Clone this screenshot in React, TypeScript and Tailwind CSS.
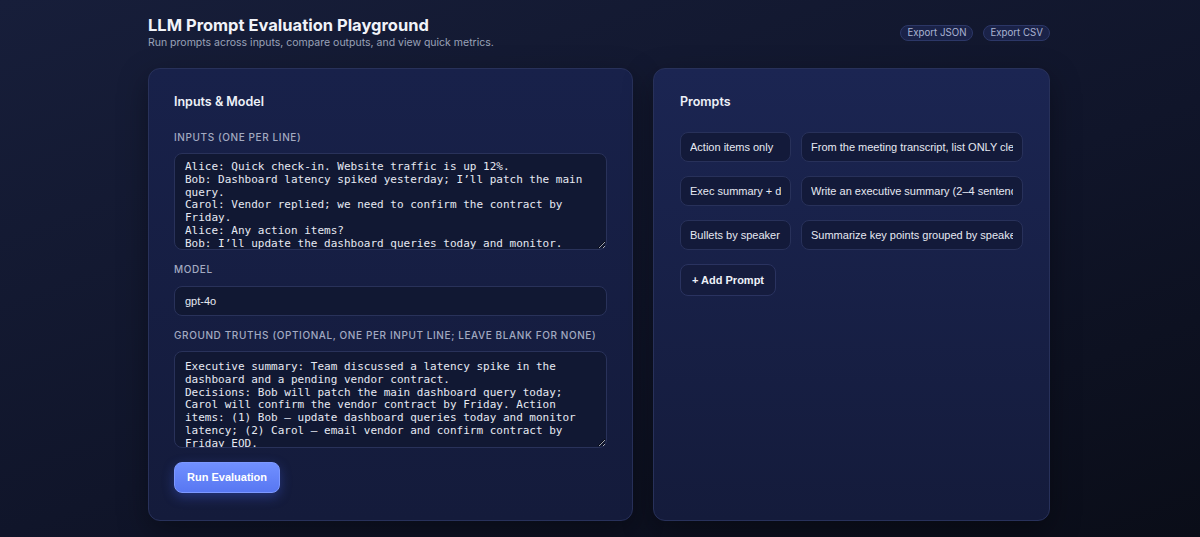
import React from 'react';

const INPUTS = `Alice: Quick check-in. Website traffic is up 12%.
Bob: Dashboard latency spiked yesterday; I’ll patch the main query.
Carol: Vendor replied; we need to confirm the contract by Friday.
Alice: Any action items?
Bob: I’ll update the dashboard queries today and monitor.`;

const TRUTHS = `Executive summary: Team discussed a latency spike in the dashboard and a pending vendor contract.
Decisions: Bob will patch the main dashboard query today; Carol will confirm the vendor contract by Friday. Action items: (1) Bob — update dashboard queries today and monitor latency; (2) Carol — email vendor and confirm contract by Friday EOD.`;

const PROMPTS = [
    { name: 'Action items only', text: 'From the meeting transcript, list ONLY clear action items with owner and due date.' },
    { name: 'Exec summary + decisions', text: 'Write an executive summary (2–4 sentences) followed by key decisions.' },
    { name: 'Bullets by speaker', text: 'Summarize key points grouped by speaker as bullet points.' },
];

const sans = { fontFamily: 'Inter, "Noto Sans", sans-serif' };
const arial = { fontFamily: '"Liberation Sans", Arial, sans-serif' };
const mono = { fontFamily: '"DejaVu Sans Mono", "Liberation Mono", monospace' };

const Label: React.FC<{ children: React.ReactNode }> = ({ children }) => (
    <div className="text-[10px] leading-[13px] font-medium uppercase tracking-[0.06em] text-[#a3aac1]">{children}</div>
);

const fieldClass = 'w-full bg-[#111833] border border-[#29325a] rounded-lg text-[#e6e9f2] outline-none';

export default function App() {
    return (
        <div
            className="min-h-[537px] w-full bg-[linear-gradient(160deg,#171e3a_0%,#10152a_55%,#0a0d18_100%)] pt-[14px] pb-4"
            style={sans}
        >
            <div className="mx-auto w-[904px] pr-[2px]">
                {/* Header */}
                <div className="flex items-center justify-between">
                    <div>
                        <h1 className="text-[16.5px] leading-[22px] font-bold text-[#f1f3f9]">LLM Prompt Evaluation Playground</h1>
                        <p className="text-[10.5px] leading-[14px] text-[#9aa2b8]">Run prompts across inputs, compare outputs, and view quick metrics.</p>
                    </div>
                    <div className="flex items-center gap-[10px] pt-[1px]">
                        <button className="h-[16px] px-[6px] rounded-full bg-[#1a2248] border border-[#2c3767] text-[9.7px] leading-[14px] text-[#aab3d2]">Export JSON</button>
                        <button className="h-[16px] px-[6px] rounded-full bg-[#1a2248] border border-[#2c3767] text-[9.7px] leading-[14px] text-[#aab3d2]">Export CSV</button>
                    </div>
                </div>

                {/* Cards */}
                <div className="mt-[18px] grid grid-cols-[485px_397px] gap-5">
                    {/* Inputs & Model */}
                    <div className="rounded-xl border border-[#28315a] bg-[linear-gradient(180deg,#18214a_0%,#141b3b_100%)] pt-[25px] px-[25px] pb-[27px] shadow-[0_10px_30px_rgba(0,0,0,0.35)]">
                        <h2 className="text-[12.5px] leading-4 font-semibold text-[#eef1f8]">Inputs &amp; Model</h2>
                        <div className="mt-[21px]"><Label>Inputs (one per line)</Label></div>
                        <textarea
                            defaultValue={INPUTS}
                            className={`${fieldClass} mt-[9px] h-[97px] px-[10px] pt-[7px] pb-0 text-[11px] leading-[12.8px] overflow-hidden block`}
                            style={mono}
                        />
                        <div className="mt-[13px]"><Label>Model</Label></div>
                        <input
                            defaultValue="gpt-4o"
                            className={`${fieldClass} mt-[10px] h-[30px] px-[10px] text-[11px] block`}
                            style={arial}
                        />
                        <div className="mt-[13px]"><Label>Ground truths (optional, one per input line; leave blank for none)</Label></div>
                        <textarea
                            defaultValue={TRUTHS}
                            className={`${fieldClass} mt-[9px] h-[97px] px-[10px] pt-[9px] pb-0 text-[11px] leading-[12.8px] overflow-hidden block`}
                            style={mono}
                        />
                        <button
                            className="mt-[14px] h-[31px] px-[12px] rounded-lg border border-[#7d98ff] bg-[linear-gradient(180deg,#7190ff_0%,#5877f2_100%)] text-[11px] font-bold text-white shadow-[0_4px_12px_rgba(70,100,240,0.35)]"
                            style={arial}
                        >
                            Run Evaluation
                        </button>
                    </div>

                    {/* Prompts */}
                    <div className="rounded-xl border border-[#28315a] bg-[linear-gradient(180deg,#1b2552_0%,#141b3b_100%)] pt-[25px] px-[26px] pb-[27px] shadow-[0_10px_30px_rgba(0,0,0,0.35)]">
                        <h2 className="text-[12.5px] leading-4 font-semibold text-[#eef1f8]">Prompts</h2>
                        <div className="mt-[22px] flex flex-col gap-[14px]">
                            {PROMPTS.map((p) => (
                                <div key={p.name} className="grid grid-cols-[111px_222px] gap-[10px]">
                                    <input
                                        defaultValue={p.name}
                                        className="h-[30px] w-full rounded-lg border border-[#28315a] bg-[#131a3a] px-[9px] text-[11px] text-[#e6e9f2] outline-none"
                                        style={arial}
                                    />
                                    <input
                                        defaultValue={p.text}
                                        className="h-[30px] w-full rounded-lg border border-[#28315a] bg-[#131a3a] px-[9px] text-[11px] text-[#e6e9f2] outline-none"
                                        style={arial}
                                    />
                                </div>
                            ))}
                            <div>
                                <button
                                    className="h-[32px] px-[11px] rounded-lg border border-[#2a3360] bg-[#151c3e] text-[11px] font-bold text-[#eef1f8]"
                                    style={arial}
                                >
                                    + Add Prompt
                                </button>
                            </div>
                        </div>
                    </div>
                </div>
            </div>
        </div>
    );
}
